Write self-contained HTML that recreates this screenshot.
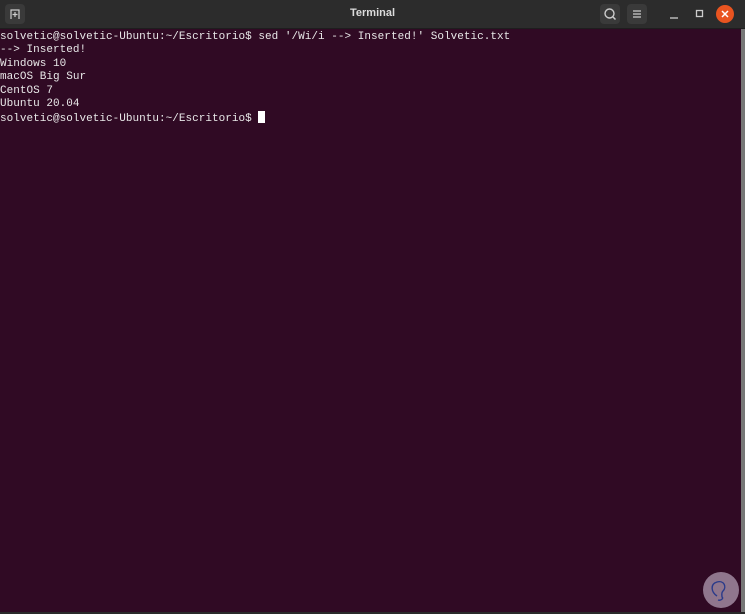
<!DOCTYPE html>
<html><head><meta charset="utf-8"><style>
html,body{margin:0;padding:0;width:745px;height:614px;overflow:hidden;background:#300a24}
.tb{position:absolute;left:0;top:0;width:745px;height:28px;background:#2c2c2c;border-bottom:1px solid #1e1e1e}
.title{position:absolute;left:0;right:0;top:0;text-align:center;color:#dcdcdc;font:bold 11px "Liberation Sans",sans-serif;line-height:27px}
.btn{position:absolute;top:4px;width:20px;height:20px;border-radius:4px;background:#3a3a3a}
.term{position:absolute;left:0;top:31px;font:11px "Liberation Mono",monospace;line-height:13.4px;letter-spacing:0.025px;color:#e8e8e8;white-space:pre}
.cur{display:inline-block;width:7px;height:12px;background:#fff;vertical-align:-2px}
.sb{position:absolute;right:0;top:29px;width:4px;height:584px;background:#777}
.bot{position:absolute;left:0;bottom:0;width:745px;height:2px;background:#2a2a2a}
</style></head><body>
<div class="tb">
<div class="btn" style="left:5px"><svg width="20" height="20"><path d="M6 15V6h8v9M10 8v5M7.5 10.5h5" stroke="#ccc" stroke-width="1.2" fill="none"/></svg></div>
<div class="title">Terminal</div>
<div class="btn" style="left:600px"><svg width="20" height="20"><circle cx="9.5" cy="9.5" r="4.5" stroke="#ccc" stroke-width="1.4" fill="none"/><path d="M12.5 12.5l3 3" stroke="#ccc" stroke-width="1.5"/></svg></div>
<div class="btn" style="left:627px"><svg width="20" height="20"><path d="M6 7h8M6 10h8M6 13h8" stroke="#ccc" stroke-width="1.3"/></svg></div>
<svg style="position:absolute;left:664px;top:4px" width="20" height="20"><path d="M6 14h8" stroke="#ccc" stroke-width="1.3"/></svg>
<svg style="position:absolute;left:690px;top:4px" width="20" height="20"><rect x="6.5" y="6.5" width="6" height="6" stroke="#ccc" stroke-width="1.3" fill="none"/></svg>
<svg style="position:absolute;left:715px;top:4px" width="20" height="20"><circle cx="10" cy="10" r="9" fill="#e95420"/><path d="M7 7l6 6M13 7l-6 6" stroke="#fff" stroke-width="1.5"/></svg>
</div>
<div class="term">solvetic@solvetic-Ubuntu:~/Escritorio$ sed '/Wi/i --> Inserted!' Solvetic.txt
--> Inserted!
Windows 10
macOS Big Sur
CentOS 7
Ubuntu 20.04
solvetic@solvetic-Ubuntu:~/Escritorio$ <span class="cur"></span></div>
<div class="sb"></div>
<div class="bot"></div>
<svg style="position:absolute;left:703px;top:572px" width="36" height="36"><circle cx="18" cy="18" r="18" fill="#a08aa0" opacity="0.85"/><path d="M14 24c-6-4-7-12 0-14 7-2 10 5 6 9-2 2-1 4-1 6 2 1-1 4-4 3" stroke="#2a3a8a" stroke-width="1.4" fill="none"/></svg>
</body></html>
